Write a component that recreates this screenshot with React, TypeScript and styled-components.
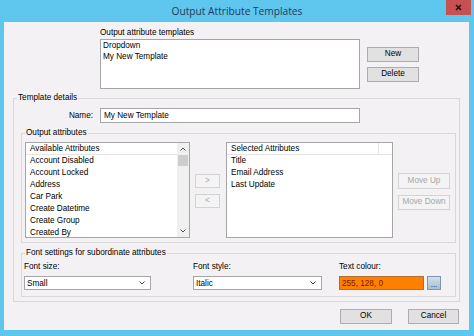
import React from 'react';
import styled, { createGlobalStyle } from 'styled-components';

const FRAME = '#5fc6ee';

const GlobalStyle = createGlobalStyle`
  html, body {
    margin: 0;
    padding: 0;
    background: ${FRAME};
  }
`;

const Window = styled.div`
  width: 474px;
  height: 336px;
  display: flex;
  flex-direction: column;
  background: ${FRAME};
  overflow: hidden;
  font-family: 'Liberation Sans', Arial, sans-serif;
  font-size: 8.2px;
  color: #000;
`;

const TitleBar = styled.div`
  height: 22px;
  flex: none;
  display: grid;
  grid-template-columns: 1fr auto 1fr;
  align-items: start;
`;

const Title = styled.div`
  grid-column: 2;
  line-height: 22px;
  font-family: 'Open Sans', 'Liberation Sans', sans-serif;
  font-size: 10.2px;
  color: #1f3a5c;
`;

const CloseButton = styled.div`
  grid-column: 3;
  justify-self: end;
  width: 25px;
  height: 15px;
  margin-right: 3px;
  background: #c75050;
  display: flex;
  align-items: center;
  justify-content: center;
`;

const Body = styled.div`
  flex: 1;
  margin: 0 5px 6px 4px;
  padding-top: 6px;
  background: #f3f1f3;
  display: flex;
  flex-direction: column;
`;

const Label = styled.div`
  line-height: 10px;
  white-space: nowrap;
`;

const TopRow = styled.div`
  display: flex;
  padding-left: 96px;
`;

const TemplatesColumn = styled.div`
  display: flex;
  flex-direction: column;
  gap: 1px;
`;

const TemplateList = styled.div`
  width: 260px;
  height: 50px;
  box-sizing: border-box;
  border: 1px solid #a6a6a6;
  background: #fff;
  padding: 0 2px;
  line-height: 11px;
`;

const ButtonColumn = styled.div<{ $top: number; $gap: number }>`
  display: flex;
  flex-direction: column;
  gap: ${p => p.$gap}px;
  margin-top: ${p => p.$top}px;
`;

const Button = styled.button<{ $width: number; $height?: number }>`
  width: ${p => p.$width}px;
  height: ${p => p.$height ?? 15}px;
  box-sizing: border-box;
  margin: 0;
  padding: 0;
  border: 1px solid #adadad;
  background: #e1e1e1;
  font-family: 'Liberation Sans', Arial, sans-serif;
  font-size: 8.2px;
  color: #000;
  line-height: 1;

  &:disabled {
    border-color: #d3d3d3;
    background: #f4f4f4;
    color: #a6a6a6;
  }
`;

const GroupBox = styled.fieldset<{ $top?: number }>`
  margin: ${p => p.$top ?? 0}px 0 0 0;
  padding: 0;
  border: 1px solid #d8d8d8;
  min-width: 0;
`;

const Legend = styled.legend`
  margin-left: 3px;
  padding: 0 1px;
  line-height: 10px;
  font-size: 8.2px;
`;

const OuterGroup = styled(GroupBox)`
  margin: 4px 9px 0 9px;
`;

const OuterContent = styled.div`
  padding: 5px 3px 4px 7px;
  display: flex;
  flex-direction: column;
`;

const NameRow = styled.div`
  display: flex;
  align-items: center;
  gap: 7px;
`;

const NameLabel = styled(Label)`
  width: 72px;
  text-align: right;
`;

const TextBox = styled.div<{ $width: number }>`
  width: ${p => p.$width}px;
  height: 15px;
  box-sizing: border-box;
  border: 1px solid #a6a6a6;
  background: #fff;
  padding-left: 3px;
  display: flex;
  align-items: center;
`;

const AttributesContent = styled.div`
  padding: 4px 5px 4px 3px;
  display: flex;
  align-items: flex-start;
`;

const ListFrame = styled.div<{ $width: number; $gap: number }>`
  width: ${p => p.$width}px;
  height: 96px;
  margin-right: ${p => p.$gap}px;
  box-sizing: border-box;
  border: 1px solid #a6a6a6;
  background: #fff;
  display: flex;
  overflow: hidden;
`;

const ListMain = styled.div`
  flex: 1;
  min-width: 0;
  display: flex;
  flex-direction: column;
`;

const ListHeader = styled.div`
  display: flex;
  height: 11px;
  flex: none;
  border-bottom: 1px solid #e5e5e5;
`;

const HeaderCell = styled.div<{ $width?: number }>`
  ${p => (p.$width ? `width: ${p.$width}px;` : 'flex: 1;')}
  flex-shrink: 0;
  box-sizing: border-box;
  padding-left: 4px;
  line-height: 11px;
  white-space: nowrap;
  border-right: ${p => (p.$width ? '1px solid #e5e5e5' : 'none')};
`;

const ListItem = styled.div`
  padding-left: 4px;
  line-height: 12px;
  white-space: nowrap;
`;

const ScrollBar = styled.div`
  width: 12px;
  flex: none;
  background: #f0f0f0;
  display: flex;
  flex-direction: column;
`;

const ScrollArrow = styled.div`
  height: 12px;
  display: flex;
  align-items: center;
  justify-content: center;
`;

const ScrollThumb = styled.div`
  height: 11px;
  margin: 0 1px;
  background: #cdcdcd;
`;

const ScrollTrack = styled.div`
  flex: 1;
`;

const FontContent = styled.div`
  padding: 4px 5px 6px 2px;
  display: flex;
`;

const FieldColumn = styled.div<{ $gap: number }>`
  display: flex;
  flex-direction: column;
  gap: 4px;
  margin-right: ${p => p.$gap}px;
`;

const Combo = styled.div<{ $width: number }>`
  width: ${p => p.$width}px;
  height: 14px;
  box-sizing: border-box;
  border: 1px solid #a6a6a6;
  background: #fff;
  padding: 0 5px 0 2px;
  display: flex;
  align-items: center;
  justify-content: space-between;
`;

const ColourRow = styled.div`
  display: flex;
  gap: 3px;
`;

const ColourBox = styled.div`
  width: 85px;
  height: 14px;
  box-sizing: border-box;
  border: 1px solid #b07030;
  background: #ff8000;
  color: #7a1a00;
  padding-left: 2px;
  display: flex;
  align-items: center;
`;

const PickButton = styled.div`
  width: 14px;
  height: 14px;
  box-sizing: border-box;
  border: 1px solid #7d95ad;
  background: linear-gradient(#d4e0ec, #a9bdd1);
  display: flex;
  align-items: flex-end;
  justify-content: center;
  line-height: 9px;
  font-size: 8px;
  color: #1a1a1a;
`;

const Footer = styled.div`
  display: flex;
  justify-content: flex-end;
  gap: 16px;
  margin-top: 7px;
  padding-right: 10px;
`;

const Chevron = ({ up = false, color = '#505050' }: { up?: boolean; color?: string }) => (
  <svg width="6" height="4" viewBox="0 0 6 4">
    <polyline
      points={up ? '0.5,3.5 3,1 5.5,3.5' : '0.5,0.5 3,3 5.5,0.5'}
      fill="none"
      stroke={color}
      strokeWidth="1"
    />
  </svg>
);

const available = [
  'Account Disabled',
  'Account Locked',
  'Address',
  'Car Park',
  'Create Datetime',
  'Create Group',
  'Created By',
];

const selected = ['Title', 'Email Address', 'Last Update'];

export default function App() {
  return (
    <Window>
      <GlobalStyle />
      <TitleBar>
        <Title>Output Attribute Templates</Title>
        <CloseButton>
          <svg width="7" height="7" viewBox="0 0 7 7">
            <path d="M1 1 L6 6 M6 1 L1 6" stroke="#2a1010" strokeWidth="1.6" />
          </svg>
        </CloseButton>
      </TitleBar>

      <Body>
        <TopRow>
          <TemplatesColumn>
            <Label>Output attribute templates</Label>
            <TemplateList>
              <div>Dropdown</div>
              <div>My New Template</div>
            </TemplateList>
          </TemplatesColumn>
          <ButtonColumn $top={19} $gap={5} style={{ marginLeft: 7 }}>
            <Button $width={52}>New</Button>
            <Button $width={52}>Delete</Button>
          </ButtonColumn>
        </TopRow>

        <OuterGroup>
          <Legend>Template details</Legend>
          <OuterContent>
            <NameRow>
              <NameLabel>Name:</NameLabel>
              <TextBox $width={260}>My New Template</TextBox>
            </NameRow>

            <GroupBox $top={5}>
              <Legend>Output attributes</Legend>
              <AttributesContent>
                <ListFrame $width={165} $gap={5}>
                  <ListMain>
                    <ListHeader>
                      <HeaderCell>Available Attributes</HeaderCell>
                    </ListHeader>
                    {available.map(a => (
                      <ListItem key={a}>{a}</ListItem>
                    ))}
                  </ListMain>
                  <ScrollBar>
                    <ScrollArrow>
                      <Chevron up />
                    </ScrollArrow>
                    <ScrollThumb />
                    <ScrollTrack />
                    <ScrollArrow>
                      <Chevron />
                    </ScrollArrow>
                  </ScrollBar>
                </ListFrame>

                <ButtonColumn $top={32} $gap={6} style={{ marginRight: 6 }}>
                  <Button $width={25} $height={14} disabled>
                    &gt;
                  </Button>
                  <Button $width={25} $height={14} disabled>
                    &lt;
                  </Button>
                </ButtonColumn>

                <ListFrame $width={167} $gap={5}>
                  <ListMain>
                    <ListHeader>
                      <HeaderCell $width={152}>Selected Attributes</HeaderCell>
                    </ListHeader>
                    {selected.map(a => (
                      <ListItem key={a}>{a}</ListItem>
                    ))}
                  </ListMain>
                </ListFrame>

                <ButtonColumn $top={31} $gap={6}>
                  <Button $width={52} $height={16} disabled>
                    Move Up
                  </Button>
                  <Button $width={52} $height={15} disabled>
                    Move Down
                  </Button>
                </ButtonColumn>
              </AttributesContent>
            </GroupBox>

            <GroupBox $top={5}>
              <Legend>Font settings for subordinate attributes</Legend>
              <FontContent>
                <FieldColumn $gap={42}>
                  <Label>Font size:</Label>
                  <Combo $width={127}>
                    <span>Small</span>
                    <Chevron color="#404040" />
                  </Combo>
                </FieldColumn>
                <FieldColumn $gap={17}>
                  <Label>Font style:</Label>
                  <Combo $width={129}>
                    <span>Italic</span>
                    <Chevron color="#404040" />
                  </Combo>
                </FieldColumn>
                <FieldColumn $gap={0}>
                  <Label>Text colour:</Label>
                  <ColourRow>
                    <ColourBox>255, 128, 0</ColourBox>
                    <PickButton>...</PickButton>
                  </ColourRow>
                </FieldColumn>
              </FontContent>
            </GroupBox>
          </OuterContent>
        </OuterGroup>

        <Footer>
          <Button $width={52}>OK</Button>
          <Button $width={51}>Cancel</Button>
        </Footer>
      </Body>
    </Window>
  );
}
